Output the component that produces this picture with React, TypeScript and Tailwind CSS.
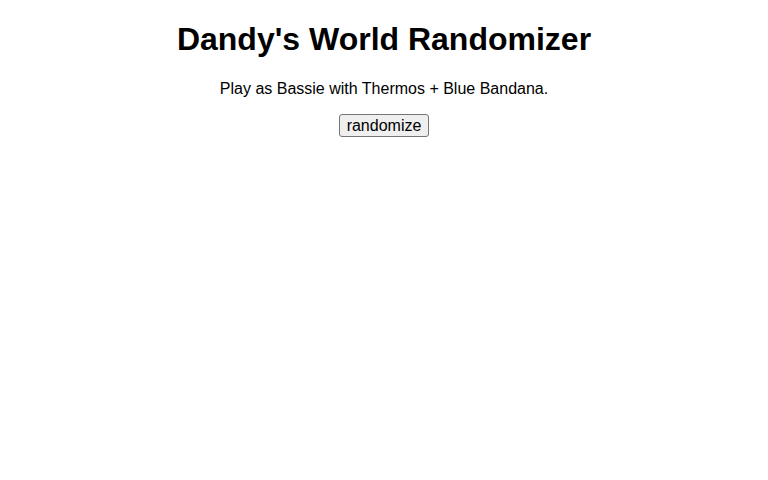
import { useState } from "react";

const characters = ["Bassie", "Boxten", "Poppy", "Astro", "Shrimpo", "Vee", "Pebble", "Tisha", "Goob", "Scraps"];
const trinkets = ["Thermos", "Blue Bandana", "Pink Bow", "Mime Makeup", "Magnifying Glass", "Ghost Snakes", "Spare Bulb", "Bone"];

const pick = <T,>(list: T[]) => list[Math.floor(Math.random() * list.length)];

export default function App() {
  const [roll, setRoll] = useState({ who: "Bassie", items: ["Thermos", "Blue Bandana"] });

  const randomize = () => {
    const first = pick(trinkets);
    let second = pick(trinkets);
    while (second === first) second = pick(trinkets);
    setRoll({ who: pick(characters), items: [first, second] });
  };

  return (
    <div className="min-h-[480px] bg-white text-center text-black font-['Liberation_Sans',Arial,sans-serif]">
      <h1 className="pt-[21px] mb-[22px] text-[32px] leading-[37px] font-bold">Dandy's World Randomizer</h1>
      <p className="text-base leading-[18px] mb-4">
        Play as {roll.who} with {roll.items[0]} + {roll.items[1]}.
      </p>
      <button
        onClick={randomize}
        className="h-[23px] px-[7px] text-base leading-[19px] bg-[#efefef] border border-[#767676] rounded-[3px] hover:bg-[#e5e5e5]"
      >
        randomize
      </button>
    </div>
  );
}
